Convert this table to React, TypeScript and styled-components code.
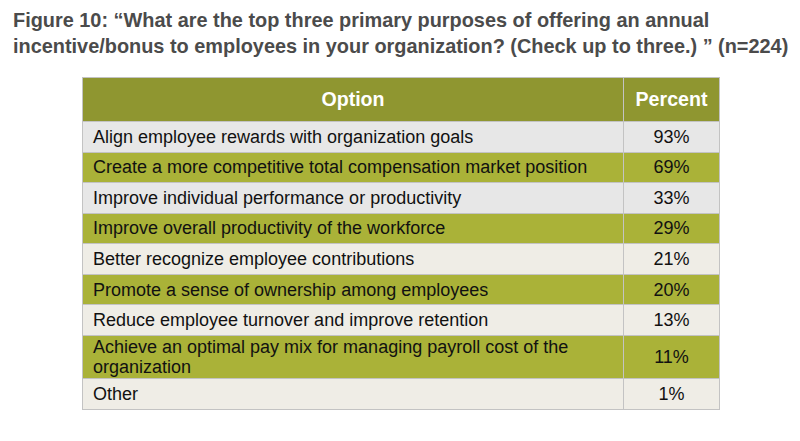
import React from "react";
import styled, { createGlobalStyle } from "styled-components";

const Global = createGlobalStyle`
  html, body { margin: 0; padding: 0; background: #ffffff; }
  body { font-family: "Liberation Sans", Arial, sans-serif; }
`;

const Page = styled.div`
  width: 800px;
  height: 441px;
  padding: 7px 0 0 13px;
  box-sizing: border-box;
  display: flex;
  flex-direction: column;
`;

const Title = styled.h1`
  margin: 0;
  font-family: "Liberation Sans", Arial, sans-serif;
  font-weight: bold;
  font-size: 19.9px;
  line-height: 26px;
  color: #4b4b4b;
  white-space: nowrap;
`;

const Table = styled.table`
  margin: 18px 0 0 69px;
  width: 638px;
  border-collapse: collapse;
  font-family: "Liberation Sans", Arial, sans-serif;
  font-size: 18px;
  color: #111111;
  border: 1px solid #c3c3c3;
`;

const HeadCell = styled.th<{ $w?: number }>`
  background: #8f9630;
  color: #ffffff;
  font-weight: bold;
  font-size: 19.6px;
  height: 43px;
  padding: 0;
  text-align: center;
  border: 1px solid #c3c3c3;
  width: ${(p) => (p.$w ? `${p.$w}px` : "auto")};
`;

type Tone = "gray" | "green" | "cream";

const toneColor: Record<Tone, string> = {
  gray: "#e7e7e7",
  green: "#aab238",
  cream: "#efede6",
};

const Row = styled.tr<{ $tone: Tone; $tall?: boolean }>`
  background: ${(p) => toneColor[p.$tone]};
  height: ${(p) => (p.$tall ? "43px" : "30.57px")};
`;

const OptionCell = styled.td`
  padding: 0 10px;
  text-align: left;
  line-height: 20px;
  border: 1px solid #c3c3c3;
`;

const PercentCell = styled.td`
  padding: 0;
  text-align: center;
  line-height: 20px;
  border: 1px solid #c3c3c3;
`;

const rows: { option: string; pct: string; tone: Tone; tall?: boolean }[] = [
  { option: "Align employee rewards with organization goals", pct: "93%", tone: "gray" },
  { option: "Create a more competitive total compensation market position", pct: "69%", tone: "green" },
  { option: "Improve individual performance or productivity", pct: "33%", tone: "gray" },
  { option: "Improve overall productivity of the workforce", pct: "29%", tone: "green" },
  { option: "Better recognize employee contributions", pct: "21%", tone: "cream" },
  { option: "Promote a sense of ownership among employees", pct: "20%", tone: "green" },
  { option: "Reduce employee turnover and improve retention", pct: "13%", tone: "cream" },
  {
    option: "Achieve an optimal pay mix for managing payroll cost of the organization",
    pct: "11%",
    tone: "green",
    tall: true,
  },
  { option: "Other", pct: "1%", tone: "cream" },
];

export default function App() {
  return (
    <>
      <Global />
      <Page>
        <Title>
          Figure 10: “What are the top three primary purposes of offering an annual
          <br />
          incentive/bonus to employees in your organization? (Check up to three.) ” (n=224)
        </Title>
        <Table>
          <thead>
            <tr>
              <HeadCell>Option</HeadCell>
              <HeadCell $w={95}>Percent</HeadCell>
            </tr>
          </thead>
          <tbody>
            {rows.map((r) => (
              <Row key={r.option} $tone={r.tone} $tall={r.tall}>
                <OptionCell>{r.option}</OptionCell>
                <PercentCell>{r.pct}</PercentCell>
              </Row>
            ))}
          </tbody>
        </Table>
      </Page>
    </>
  );
}
